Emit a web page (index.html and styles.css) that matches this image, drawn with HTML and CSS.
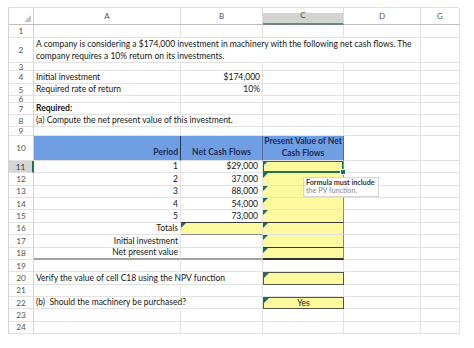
FILE: index.html
```html
<!DOCTYPE html>
<html>
<head>
<meta charset="utf-8">
<link rel="stylesheet" href="styles.css">
</head>
<body>
<div class="sheet">
  <!-- header row -->
  <div class="corner"><span class="corner-tri"></span></div>
  <div class="ch">A</div>
  <div class="ch">B</div>
  <div class="ch ch-sel">C</div>
  <div class="ch">D</div>
  <div class="ch">G</div>

  <!-- 1 -->
  <div class="rh">1</div><div class="c"></div><div class="c"></div><div class="c"></div><div class="c"></div><div class="c"></div>
  <!-- 2 -->
  <div class="rh">2</div>
  <div class="c span4 wrap">A company is considering a $174,000 investment in machinery with the following net cash flows. The company requires a 10% return on its investments.</div>
  <div class="c"></div>
  <!-- 3 -->
  <div class="rh">3</div><div class="c"></div><div class="c"></div><div class="c"></div><div class="c"></div><div class="c"></div>
  <!-- 4 -->
  <div class="rh">4</div><div class="c">Initial investment</div><div class="c r">$174,000</div><div class="c"></div><div class="c"></div><div class="c"></div>
  <!-- 5 -->
  <div class="rh">5</div><div class="c">Required rate of return</div><div class="c r">10%</div><div class="c"></div><div class="c"></div><div class="c"></div>
  <!-- 6 -->
  <div class="rh">6</div><div class="c"></div><div class="c"></div><div class="c"></div><div class="c"></div><div class="c"></div>
  <!-- 7 -->
  <div class="rh">7</div><div class="c b">Required:</div><div class="c"></div><div class="c"></div><div class="c"></div><div class="c"></div>
  <!-- 8 -->
  <div class="rh">8</div><div class="c span2">(a) Compute the net present value of this investment.</div><div class="c"></div><div class="c"></div><div class="c"></div>
  <!-- 9 -->
  <div class="rh">9</div><div class="c"></div><div class="c"></div><div class="c"></div><div class="c"></div><div class="c"></div>
  <!-- 10 -->
  <div class="rh">10</div>
  <div class="c hd hd-a r">Period</div>
  <div class="c hd hd-b ctr">Net Cash Flows</div>
  <div class="c hd hd-c ctr">Present Value of Net<br>Cash Flows</div>
  <div class="c"></div><div class="c"></div>
  <!-- 11 -->
  <div class="rh rh-sel">11</div><div class="c r">1</div><div class="c r pad">$29,000</div><div class="c y yc tri sel"></div><div class="c"></div><div class="c"></div>
  <!-- 12 -->
  <div class="rh">12</div><div class="c r">2</div><div class="c r pad">37,000</div><div class="c y yc tri"></div><div class="c"></div><div class="c"></div>
  <!-- 13 -->
  <div class="rh">13</div><div class="c r">3</div><div class="c r pad">88,000</div><div class="c y yc tri"></div><div class="c"></div><div class="c"></div>
  <!-- 14 -->
  <div class="rh">14</div><div class="c r">4</div><div class="c r pad">54,000</div><div class="c y yc tri"></div><div class="c"></div><div class="c"></div>
  <!-- 15 -->
  <div class="rh">15</div><div class="c r">5</div><div class="c r pad dk-b">73,000</div><div class="c y yc tri dk-b"></div><div class="c"></div><div class="c"></div>
  <!-- 16 -->
  <div class="rh">16</div><div class="c r">Totals</div><div class="c y tri md-b"></div><div class="c y yc tri"></div><div class="c"></div><div class="c"></div>
  <!-- 17 -->
  <div class="rh">17</div><div class="c r">Initial investment</div><div class="c"></div><div class="c y yc tri dk-b"></div><div class="c"></div><div class="c"></div>
  <!-- 18 -->
  <div class="rh">18</div><div class="c r gy-bb">Net present value</div><div class="c gy-bb"></div><div class="c y yc tri dk-bb"></div><div class="c"></div><div class="c"></div>
  <!-- 19 -->
  <div class="rh">19</div><div class="c"></div><div class="c"></div><div class="c"></div><div class="c"></div><div class="c"></div>
  <!-- 20 -->
  <div class="rh">20</div><div class="c span2">Verify the value of cell C18 using the NPV function</div><div class="c y box tri"></div><div class="c"></div><div class="c"></div>
  <!-- 21 -->
  <div class="rh">21</div><div class="c"></div><div class="c"></div><div class="c"></div><div class="c"></div><div class="c"></div>
  <!-- 22 -->
  <div class="rh">22</div><div class="c span2">(b)&nbsp; Should the machinery be purchased?</div><div class="c y box tri ctr">Yes</div><div class="c"></div><div class="c"></div>
  <!-- 23 -->
  <div class="rh">23</div><div class="c"></div><div class="c"></div><div class="c"></div><div class="c"></div><div class="c"></div>
  <!-- 24 -->
  <div class="rh">24</div><div class="c"></div><div class="c"></div><div class="c"></div><div class="c"></div><div class="c"></div>

  <div class="tip"><span class="tip-title">Formula must include</span><span class="tip-body">the PV function.</span></div>
</div>
</body>
</html>
```

FILE: styles.css
```css
* { box-sizing: border-box; }
html, body { margin: 0; padding: 0; background: #fff; }
body { font-family: Lato, "Open Sans", sans-serif; color: #161616; }

.sheet {
  position: relative;
  margin: 7px 0 0 8px;
  width: 451px;
  display: grid;
  grid-template-columns: 25px 147px 82px 81px 77px 39px;
  grid-template-rows: 17px 13px 25px 8px 13px 12px 7px 12px 12px 9px 25px repeat(14, 12.36px);
  border-left: 1px solid #d4d4d4;
  border-top: 1px solid #e2e2e2;
  font-size: 8.5px;
}

.corner {
  position: relative;
  border-right: 1px solid #d4d4d4;
  border-bottom: 1px solid #bdbdbd;
}
.corner-tri {
  position: absolute;
  right: 2px;
  bottom: 2px;
  width: 0; height: 0;
  border-left: 7px solid transparent;
  border-bottom: 7px solid #c4c4c4;
}

.ch {
  display: flex;
  align-items: flex-end;
  justify-content: center;
  padding-bottom: 3px;
  color: #555;
  font-size: 8px;
  border-right: 1px solid #dcdcdc;
  border-bottom: 1px solid #bdbdbd;
}
.ch-sel {
  background: linear-gradient(#fff 0 5px, #d3d3d3 5px);
  border-bottom: 2px solid #6d8a78;
  color: #444;
}

.rh {
  display: flex;
  align-items: center;
  justify-content: center;
  color: #555;
  font-size: 8.3px;
  border-right: 1px solid #d4d4d4;
  border-bottom: 1px solid #e2e2e2;
}
.rh-sel {
  background: #d5d5d5;
  border-right: 2px solid #217346;
  color: #333;
}

.c {
  position: relative;
  display: flex;
  align-items: center;
  padding: 0 2px;
  white-space: nowrap;
  border-right: 1px solid #e2e2e2;
  border-bottom: 1px solid #e2e2e2;
  line-height: 1;
}
.r { justify-content: flex-end; }
.ctr { justify-content: center; text-align: center; }
.b { font-weight: 700; }
.pad { padding-right: 4px; }
.span2 { grid-column: span 2; }
.span4 { grid-column: span 4; }
.wrap {
  white-space: normal;
  line-height: 12px;
  padding-right: 1px;
}

/* blue table header */
.hd {
  background: #6f9fe2;
  color: #1c2b57;
  font-weight: 700;
  align-items: flex-end;
  padding-bottom: 2px;
  line-height: 12px;
}
.hd-a { border-right: 1px solid #24385e; }
.hd-b { border-right: 1px solid #4a6fa5; }
.hd-c { border-right: 1px solid #4a6fa5; padding-bottom: 1px; }

/* yellow input cells */
.y { background: #fdf99e; }
.yc { border-right: 1px solid #8a8a72; }
.dk-b { border-bottom: 1px solid #3a3a3a; }
.md-b { border-bottom: 1px solid #8d8d8d; }
.gy-bb { border-bottom: 2px solid #a3a3a3; }
.dk-bb { border-bottom: 2px solid #333; }
.box { border: 1px solid #55554a; }

/* error indicator triangles */
.tri::before {
  content: "";
  position: absolute;
  left: 0;
  top: 0;
  width: 0; height: 0;
  border-top: 5px solid #1d6a6a;
  border-right: 5px solid transparent;
}

/* selected cell */
.sel { box-shadow: inset 0 0 0 1px #217346; border-bottom: 1px solid #217346; }
.sel::after {
  content: "";
  position: absolute;
  right: -3px;
  bottom: -3px;
  width: 4px; height: 4px;
  background: #217346;
  border: 1px solid #fff;
  z-index: 2;
}

/* comment tooltip */
.tip {
  position: absolute;
  left: 294px;
  top: 169px;
  width: 76px;
  padding: 1px 2px;
  background: #fff;
  border: 1px solid #d6d6d6;
  font-size: 7.2px;
  line-height: 8px;
  display: flex;
  flex-direction: column;
  z-index: 3;
}
.tip-title { font-weight: 700; color: #333; }
.tip-body { color: #8a8a8a; }
```
